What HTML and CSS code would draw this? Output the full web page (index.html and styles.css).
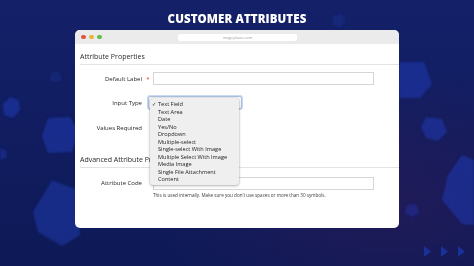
FILE: index.html
```html
<!DOCTYPE html>
<html>
<head>
<meta charset="utf-8">
<link rel="stylesheet" href="styles.css">
</head>
<body>
<div class="stage">
  <svg class="bg" width="474" height="266" viewBox="0 0 474 266">
    <defs>
      <radialGradient id="glow" cx="0.82" cy="0.75" r="0.5">
        <stop offset="0" stop-color="#3a1a55" stop-opacity="0.4"/>
        <stop offset="1" stop-color="#3a1a55" stop-opacity="0"/>
      </radialGradient>
      <filter id="soft" x="-20%" y="-20%" width="140%" height="140%">
        <feGaussianBlur stdDeviation="1.2"/>
      </filter>
    </defs>
    <rect width="474" height="266" fill="url(#glow)"/>
    <g filter="url(#soft)" fill="#1e38ac">
      <polygon points="10,97 19,100 20,110 13,118 4,115 3,104" opacity="0.6"/>
      <polygon points="0,148 6,150 7,158 0,160" opacity="0.45"/>
      <polygon points="48,118 70,117 78,132 72,152 48,153 42,136" opacity="0.6"/>
      <polygon points="52,180 78,190 80,235 62,246 38,232 33,212" opacity="0.55"/>
      <polygon points="52,72 60,72 62,80 55,83 49,79" opacity="0.25"/>
      <polygon points="399,62 424,62 432,84 420,98 399,98" opacity="0.6"/>
      <polygon points="426,117 442,119 447,132 438,141 426,138 421,127" opacity="0.6"/>
      <polygon points="462,155 474,160 474,225 462,224 442,200 448,175" opacity="0.6"/>
      <polygon points="407,205 416,204 419,213 412,217 405,213" opacity="0.45"/>
      <polygon points="333,15 342,14 346,22 340,28 332,25" opacity="0.25"/>
    </g>
    <g fill="#1a34a0" opacity="0.9">
      <polygon points="424,246 431,251.5 424,257"/>
      <polygon points="441,246 448,251.5 441,257"/>
      <polygon points="458,246 465,251.5 458,257"/>
    </g>
  </svg>

  <h1 class="title">CUSTOMER ATTRIBUTES</h1>

  <div class="window">
    <div class="titlebar">
      <div class="lights">
        <span class="dot red"></span>
        <span class="dot yellow"></span>
        <span class="dot green"></span>
      </div>
      <div class="url">mageplaza.com</div>
    </div>
    <div class="content">
      <div class="section-title">Attribute Properties</div>
      <div class="row row-label">
        <div class="label">Default Label</div>
        <div class="req">*</div>
        <div class="input"></div>
      </div>
      <div class="row row-type">
        <div class="label">Input Type</div>
        <div class="req"></div>
        <div class="select"></div>
      </div>
      <div class="row row-values">
        <div class="label">Values Required</div>
      </div>
      <div class="section-title adv">Advanced Attribute Properties</div>
      <div class="row row-code">
        <div class="label">Attribute Code</div>
        <div class="req"></div>
        <div class="input"></div>
      </div>
      <div class="help">This is used internally. Make sure you don't use spaces or more than 30 symbols.</div>

      <ul class="dropdown">
        <li class="checked">Text Field</li>
        <li>Text Area</li>
        <li>Date</li>
        <li>Yes/No</li>
        <li>Dropdown</li>
        <li>Multiple-select</li>
        <li>Single-select With Image</li>
        <li>Multiple Select With Image</li>
        <li>Media Image</li>
        <li>Single File Attachment</li>
        <li>Content</li>
      </ul>
    </div>
  </div>
</div>
</body>
</html>
```
FILE: styles.css
```css
* { box-sizing: border-box; }
html, body { margin: 0; padding: 0; }
body {
  width: 474px;
  height: 266px;
  overflow: hidden;
  background: #101b5a;
  font-family: "Open Sans", "Liberation Sans", sans-serif;
}
.stage {
  position: relative;
  width: 474px;
  height: 266px;
  background: linear-gradient(180deg, #142169 0%, #101c5d 60%, #0e1a57 100%);
  padding-top: 12px;
}
.bg { position: absolute; left: 0; top: 0; }
.title {
  position: relative;
  margin: 0;
  height: 18px;
  line-height: 14px;
  text-align: center;
  color: #ffffff;
  font-family: "Open Sans", sans-serif;
  font-weight: 800;
  font-size: 11.5px;
  letter-spacing: 0.1px;
}
.window {
  position: relative;
  margin-left: 75px;
  width: 324px;
  height: 198px;
  background: #ffffff;
  border-radius: 5px;
  overflow: hidden;
}
.titlebar {
  height: 14px;
  background: #ebebeb;
  display: flex;
  align-items: center;
  position: relative;
}
.lights {
  display: flex;
  gap: 3.5px;
  padding-left: 6px;
}
.dot { width: 4.5px; height: 4.5px; border-radius: 50%; display: block; }
.red { background: #e0553f; }
.yellow { background: #e8b53a; }
.green { background: #62bf48; }
.url {
  position: absolute;
  left: 103px;
  top: 3.5px;
  width: 119px;
  height: 7.5px;
  background: #ffffff;
  border-radius: 2px;
  font-size: 4px;
  line-height: 7.5px;
  text-align: center;
  color: #9a9a9a;
}
.content {
  position: relative;
  padding: 8px 0 0 5px;
}
.section-title {
  font-size: 7px;
  line-height: 9px;
  color: #2a2a2a;
  height: 12.5px;
  border-bottom: 1px solid #e3e3e3;
  white-space: nowrap;
}
.row {
  display: flex;
  align-items: center;
}
.label {
  width: 62px;
  text-align: right;
  font-size: 6px;
  color: #262626;
  white-space: nowrap;
}
.req {
  width: 11px;
  text-align: center;
  color: #e02b27;
  font-size: 6px;
  padding-left: 1px;
}
.input {
  width: 221px;
  height: 13px;
  border: 1px solid #d6d6d6;
  background: #fff;
}
.select {
  margin-left: -5px;
  width: 94px;
  height: 13px;
  border: 1px solid #a9bfe0;
  border-radius: 2px;
  box-shadow: 0 0 0 1px #c9d9f2;
  background: #fafafa;
}
.row-label { margin-top: 7.5px; }
.row-type { margin-top: 11px; }
.row-values { margin-top: 12px; height: 13px; }
.adv { margin-top: 21px; height: 13px; }
.row-code { margin-top: 8.5px; }
.help {
  margin-left: 73px;
  margin-top: 2px;
  font-size: 4.6px;
  line-height: 7px;
  color: #3a3a3a;
  white-space: nowrap;
}
.dropdown {
  position: absolute;
  left: 75px;
  top: 54px;
  width: 89px;
  height: 87px;
  margin: 0;
  padding: 3px 0 0 0;
  list-style: none;
  background: #efefef;
  border-radius: 3px;
  box-shadow: 0 1px 3px rgba(0,0,0,0.25), 0 0 0 0.5px rgba(0,0,0,0.12);
}
.dropdown li {
  position: relative;
  padding-left: 8px;
  height: 7.5px;
  line-height: 7.5px;
  font-size: 5.6px;
  color: #222222;
  white-space: nowrap;
}
.dropdown li.checked::before {
  content: "\2713";
  position: absolute;
  left: 2px;
  top: 0;
  font-size: 5px;
  font-family: "DejaVu Sans", sans-serif;
}
```
